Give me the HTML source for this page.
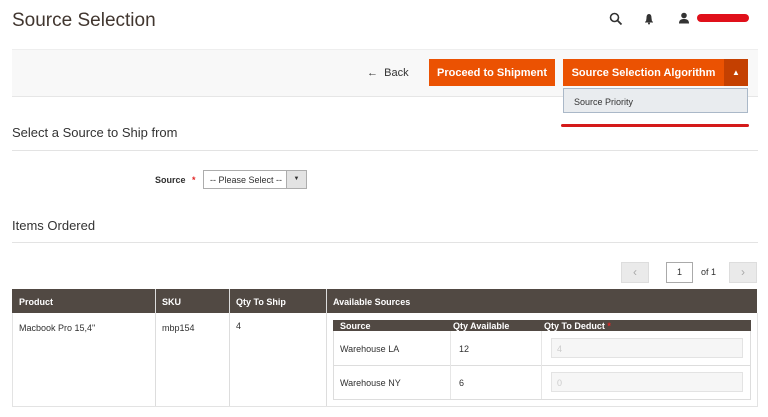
<!DOCTYPE html>
<html><head><style>
*{margin:0;padding:0;box-sizing:border-box}
body{width:768px;height:417px;background:#fff;font-family:"Liberation Sans",sans-serif;color:#303030;position:relative;overflow:hidden;font-size:9px}
.a{position:absolute}
.th{color:#fff;font-weight:bold;font-size:9px}
</style></head><body>
<div class="a" style="left:12px;top:10px;font-size:19px;color:#41362f">Source Selection</div>
<svg class="a" style="left:609px;top:12px" width="14" height="14" viewBox="0 0 14 14"><circle cx="5.5" cy="5.5" r="4" fill="none" stroke="#333" stroke-width="1.6"/><path d="M8.5 8.5L12.5 12.5" stroke="#333" stroke-width="1.8"/></svg>
<svg class="a" style="left:644px;top:13px" width="10" height="12" viewBox="0 0 10 12"><path d="M5 1C3 1 2.5 3 2.5 5L2 8.5H8L7.5 5C7.5 3 7 1 5 1Z" fill="#333"/><rect x="1" y="8.5" width="8" height="1" fill="#333"/><circle cx="5" cy="10.5" r="1" fill="#333"/></svg>
<svg class="a" style="left:678px;top:12px" width="12" height="12" viewBox="0 0 12 12"><circle cx="6" cy="3.5" r="2.8" fill="#333"/><path d="M1 11.5C1 8 3 7 6 7S11 8 11 11.5Z" fill="#333"/></svg>
<div class="a" style="left:697px;top:14px;width:52px;height:8px;background:#e0101a;border-radius:4px"></div>
<div class="a" style="left:12px;top:49px;width:746px;height:48px;background:#f8f8f8;border-top:1px solid #eee;border-bottom:1px solid #e6e6e6"></div>
<div class="a" style="left:367px;top:67px;font-size:11px;color:#333">&#8592;&nbsp; Back</div>
<div class="a" style="left:429px;top:59px;width:126px;height:27px;background:#eb5202;color:#fff;font-weight:bold;font-size:11px;text-align:center;line-height:28px">Proceed to Shipment</div>
<div class="a" style="left:563px;top:59px;width:161px;height:27px;background:#eb5202;color:#fff;font-weight:bold;font-size:11px;text-align:center;line-height:28px">Source Selection Algorithm</div>
<div class="a" style="left:724px;top:59px;width:24px;height:27px;background:#c44001;color:#fff;font-size:8px;text-align:center;line-height:27px">&#9650;</div>
<div class="a" style="left:563px;top:88px;width:185px;height:25px;background:#e9ecef;border:1px solid #aab8c8;font-size:9px;padding:8px 0 0 10px;color:#333">Source Priority</div>
<div class="a" style="left:561px;top:124px;width:188px;height:3px;background:#d41a1a;border-radius:2px"></div>
<div class="a" style="left:12px;top:125px;font-size:13px;color:#333">Select a Source to Ship from</div>
<div class="a" style="left:12px;top:150px;width:746px;height:1px;background:#e3e3e3"></div>
<div class="a" style="left:155px;top:175px;font-weight:bold;font-size:9px">Source <span style="color:#e22626;margin-left:4px">*</span></div>
<div class="a" style="left:203px;top:170px;width:104px;height:19px;border:1px solid #adadad;background:#fff;font-size:9px;padding:4px 0 0 6px">-- Please Select --</div>
<div class="a" style="left:286px;top:171px;width:20px;height:17px;background:#e3e3e3;border-left:1px solid #adadad;font-size:6px;text-align:center;line-height:17px">&#9660;</div>
<div class="a" style="left:12px;top:242px;width:746px;height:1px;background:#e3e3e3"></div>
<div class="a" style="left:12px;top:218px;font-size:13px;color:#333">Items Ordered</div>
<div class="a" style="left:621px;top:262px;width:28px;height:21px;background:#eaeaea;border:1px solid #ddd;color:#aaa;text-align:center;line-height:19px;font-size:12px">&#8249;</div>
<div class="a" style="left:666px;top:262px;width:27px;height:21px;border:1px solid #aaa;text-align:center;line-height:19px;font-size:9px">1</div>
<div class="a" style="left:701px;top:267px;font-size:9px">of 1</div>
<div class="a" style="left:729px;top:262px;width:28px;height:21px;background:#eaeaea;border:1px solid #ddd;color:#aaa;text-align:center;line-height:19px;font-size:12px">&#8250;</div>
<div class="a" style="left:12px;top:289px;width:745px;height:24px;background:#514943"></div>
<div class="a th" style="left:19px;top:297px">Product</div>
<div class="a th" style="left:162px;top:297px">SKU</div>
<div class="a th" style="left:236px;top:297px">Qty To Ship</div>
<div class="a th" style="left:333px;top:297px">Available Sources</div>
<div class="a" style="left:155px;top:289px;width:1px;height:117px;background:#ddd"></div>
<div class="a" style="left:229px;top:289px;width:1px;height:117px;background:#ddd"></div>
<div class="a" style="left:326px;top:289px;width:1px;height:117px;background:#ddd"></div>
<div class="a" style="left:12px;top:313px;width:1px;height:93px;background:#e3e3e3"></div>
<div class="a" style="left:757px;top:313px;width:1px;height:93px;background:#e3e3e3"></div>
<div class="a" style="left:12px;top:406px;width:746px;height:1px;background:#e3e3e3"></div>
<div class="a" style="left:19px;top:323px">Macbook Pro 15,4"</div>
<div class="a" style="left:162px;top:323px">mbp154</div>
<div class="a" style="left:236px;top:321px">4</div>
<div class="a" style="left:333px;top:320px;width:418px;height:80px;border:1px solid #ddd"></div>
<div class="a" style="left:333px;top:320px;width:418px;height:11px;background:#514943"></div>
<div class="a th" style="left:340px;top:321px">Source</div>
<div class="a th" style="left:453px;top:321px">Qty Available</div>
<div class="a th" style="left:544px;top:321px">Qty To Deduct <span style="color:#e22626">*</span></div>
<div class="a" style="left:333px;top:365px;width:418px;height:1px;background:#ddd"></div>
<div class="a" style="left:450px;top:331px;width:1px;height:68px;background:#e6e6e6"></div>
<div class="a" style="left:541px;top:331px;width:1px;height:68px;background:#e6e6e6"></div>
<div class="a" style="left:340px;top:344px">Warehouse LA</div>
<div class="a" style="left:459px;top:344px">12</div>
<div class="a" style="left:340px;top:378px">Warehouse NY</div>
<div class="a" style="left:459px;top:378px">6</div>
<div class="a" style="left:551px;top:338px;width:192px;height:20px;background:#f6f6f6;border:1px solid #e3e3e3;color:#ccc;padding:5px 0 0 5px">4</div>
<div class="a" style="left:551px;top:372px;width:192px;height:20px;background:#f6f6f6;border:1px solid #e3e3e3;color:#ccc;padding:5px 0 0 5px">0</div>
</body></html>
